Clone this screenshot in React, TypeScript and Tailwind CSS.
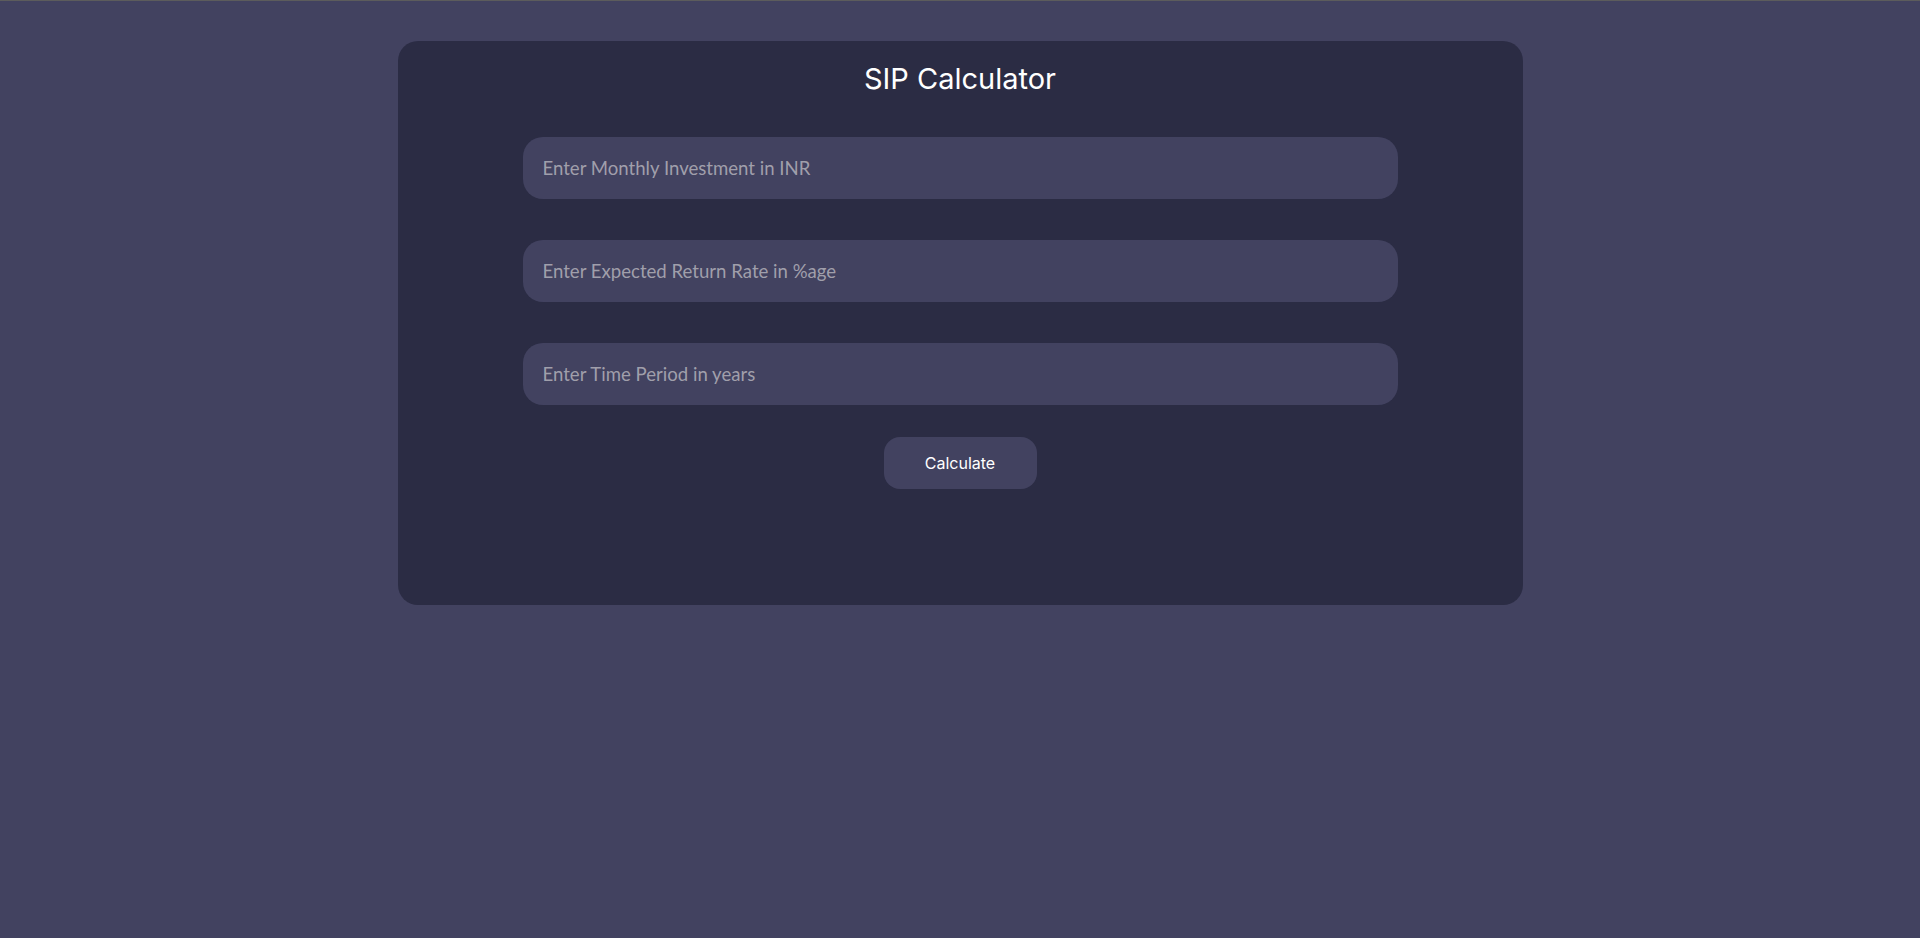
const fields = [
  "Enter Monthly Investment in INR",
  "Enter Expected Return Rate in %age",
  "Enter Time Period in years",
];

const App = () => {
  return (
    <div className="min-h-screen bg-[#424260] border-t border-[#5c5c5c] pt-[40px]">
      <div className="mx-auto w-[1125px] h-[564px] rounded-[20px] bg-[#2b2c44] flex flex-col items-center pt-[19px]">
        <h1 className="text-[29px] leading-[38px] text-white font-['Inter',sans-serif]">
          SIP Calculator
        </h1>
        <div className="mt-[39px] flex flex-col gap-[41px] w-[875px]">
          {fields.map((f) => (
            <input
              key={f}
              type="text"
              placeholder={f}
              className="h-[62px] w-full rounded-[20px] bg-[#424260] px-[20px] text-[18.6px] text-white placeholder:text-[#a09fab] outline-none font-['Lato',sans-serif]"
            />
          ))}
        </div>
        <button className="mt-[32px] h-[52px] w-[153px] rounded-[16px] bg-[#424260] text-white text-[16px] font-['Inter',sans-serif]">
          Calculate
        </button>
      </div>
    </div>
  );
};

export default App;
